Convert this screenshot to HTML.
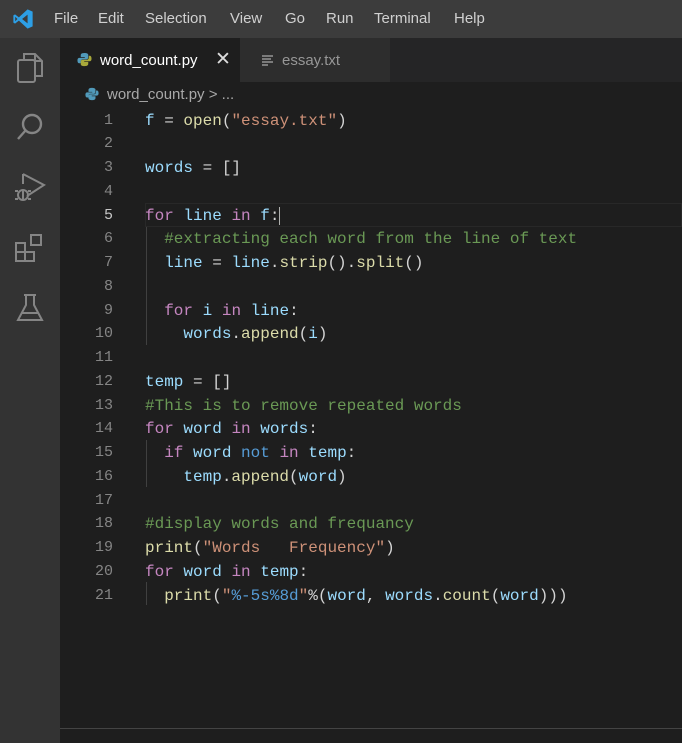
<!DOCTYPE html>
<html><head><style>
*{margin:0;padding:0;box-sizing:border-box}
body{width:682px;height:743px;background:#1e1e1e;overflow:hidden;font-family:"Liberation Sans",sans-serif;position:relative}
#title{position:absolute;left:0;top:0;width:682px;height:38px;background:#3c3c3c;color:#d0d0d0;font-size:15px}
#title span{position:absolute;top:10px}
#act{position:absolute;left:0;top:38px;width:60px;height:705px;background:#333}
#tabs{position:absolute;left:60px;top:38px;width:622px;height:44px;background:#252526}
.tab{position:absolute;top:0;height:44px;font-size:15px}
#code{position:absolute;left:60px;top:82px;width:622px;height:646px;background:#1e1e1e}
.ln{position:absolute;left:0;width:53px;text-align:right;color:#858585;font-family:"Liberation Mono",monospace;font-size:15px;height:24px;line-height:24px}
.cl{position:absolute;left:85px;white-space:pre;font-family:"Liberation Mono",monospace;font-size:16px;height:24px;line-height:24px;color:#d4d4d4}
.k{color:#c586c0}.v{color:#9cdcfe}.f{color:#dcdcaa}.s{color:#ce9178}.c{color:#6a9955}.b{color:#569cd6}
.g{position:absolute;width:1px;background:#404040}
</style></head><body>
<div id="title">
<svg style="position:absolute;left:12px;top:8px" width="22" height="22" viewBox="0 0 24 24"><path d="M17 1.5 L22.5 4 V20 L17 22.5 L7.5 13.8 L3.3 17 L1.5 16 V8 L3.3 7 L7.5 10.2 Z M17 7.2 L11 12 L17 16.8 Z M3.5 9.5 V14.5 L6 12 Z" fill="#2d9fe6" fill-rule="evenodd"/></svg>
<span style="left:54px">File</span><span style="left:98px">Edit</span><span style="left:145px">Selection</span><span style="left:230px">View</span><span style="left:285px">Go</span><span style="left:326px">Run</span><span style="left:374px">Terminal</span><span style="left:454px">Help</span>
</div>
<div id="act">
<svg style="position:absolute;left:15px;top:14px" width="30" height="32" viewBox="0 0 30 32" fill="none" stroke="#858585" stroke-width="2"><path d="M9 7 V2 H20 L27 9 V24 H20"/><path d="M20 2 V9 H27"/><rect x="3" y="8" width="17" height="22" rx="2"/></svg>
<svg style="position:absolute;left:15px;top:74px" width="30" height="32" viewBox="0 0 30 32" fill="none" stroke="#858585" stroke-width="2.4"><circle cx="17" cy="12" r="9"/><path d="M10.5 18.5 L3 27"/></svg>
<svg style="position:absolute;left:13px;top:133px" width="34" height="34" viewBox="0 0 34 34" fill="none" stroke="#858585" stroke-width="2"><path d="M10 3 V13 M10 3 L31 14 L14 25"/><circle cx="10" cy="24" r="5"/><path d="M2 20 H5 M2 28 H5 M15 20 H18 M15 28 H18 M10 19 V29"/></svg>
<svg style="position:absolute;left:14px;top:194px" width="32" height="32" viewBox="0 0 32 32" fill="none" stroke="#858585" stroke-width="2"><rect x="2" y="11" width="9" height="9"/><path d="M2 20 V29 H20 V20 H11 V11"/><path d="M11 20 V29"/><rect x="17" y="3" width="10" height="10"/></svg>
<svg style="position:absolute;left:15px;top:254px" width="30" height="32" viewBox="0 0 30 32" fill="none" stroke="#858585" stroke-width="2"><path d="M9 3 H21 M11 3 V13 L3 28 H27 L19 13 V3"/><path d="M7 21 H23"/></svg>
</div>
<div id="tabs">
<div class="tab" style="left:0;width:180px;background:#1e1e1e">
<svg style="position:absolute;left:17px;top:14px" width="15" height="15" viewBox="0 0 16 16"><path d="M8 1 C4 1 4 2.5 4 4 V5.5 H8.3 V6.2 H2.5 C1 6.2 0.5 7.5 0.5 9 C0.5 11 1.2 12 2.5 12 H4 V10 C4 8.7 5 7.8 6.2 7.8 H10 C11 7.8 12 7 12 6 V3 C12 1.8 10.5 1 8 1Z" fill="#519aba"/><path d="M8 15 C12 15 12 13.5 12 12 V10.5 H7.7 V9.8 H13.5 C15 9.8 15.5 8.5 15.5 7 C15.5 5 14.8 4 13.5 4 H12.6 V6 C12.6 7.3 11.6 8.3 10.3 8.3 H6 C5 8.3 4 9 4 10 V13 C4 14.2 5.5 15 8 15Z" fill="#cbcb41" opacity=".8"/></svg>
<span style="position:absolute;left:40px;top:14px;color:#fff">word_count.py</span>
<span style="position:absolute;left:155px;top:10px;color:#ddd;font-size:19px">✕</span>
</div>
<div class="tab" style="left:180px;width:150px;background:#2d2d2d">
<svg style="position:absolute;left:22px;top:16px" width="12" height="12" viewBox="0 0 12 12" stroke="#aaa" stroke-width="1.3"><path d="M0 2 H11 M0 5 H9 M0 8 H11 M0 11 H6"/></svg>
<span style="position:absolute;left:42px;top:14px;color:#969696">essay.txt</span>
</div>
</div>
<div id="code">
<svg style="position:absolute;left:25px;top:5px" width="14" height="14" viewBox="0 0 16 16"><path d="M8 1 C4 1 4 2.5 4 4 V5.5 H8.3 V6.2 H2.5 C1 6.2 0.5 7.5 0.5 9 C0.5 11 1.2 12 2.5 12 H4 V10 C4 8.7 5 7.8 6.2 7.8 H10 C11 7.8 12 7 12 6 V3 C12 1.8 10.5 1 8 1Z" fill="#519aba"/><path d="M8 15 C12 15 12 13.5 12 12 V10.5 H7.7 V9.8 H13.5 C15 9.8 15.5 8.5 15.5 7 C15.5 5 14.8 4 13.5 4 H12.6 V6 C12.6 7.3 11.6 8.3 10.3 8.3 H6 C5 8.3 4 9 4 10 V13 C4 14.2 5.5 15 8 15Z" fill="#519aba"/></svg>
<span style="position:absolute;left:47px;top:4px;color:#a9a9a9;font-size:15px">word_count.py &gt; ...</span>
<div style="position:absolute;left:85px;top:121px;width:537px;height:24px;border:1px solid #282828;border-left:none"></div>
<div style="position:absolute;left:85px;top:121px;width:1px;height:24px;background:#282828"></div>
<div class="g" style="left:86px;top:145px;height:118px"></div>
<div class="g" style="left:86px;top:358px;height:47px"></div>
<div class="g" style="left:86px;top:500px;height:23px"></div>
<div id="lines"></div>
<div style="position:absolute;left:0;top:646px;width:622px;height:1px;background:#444"></div>
</div>
<script>
var L=[
'<span class="v">f</span> = <span class="f">open</span>(<span class="s">"essay.txt"</span>)',
'',
'<span class="v">words</span> = []',
'',
'<span class="k">for</span> <span class="v">line</span> <span class="k">in</span> <span class="v">f</span>:<span style="border-left:1px solid #aeafad"></span>',
'  <span class="c">#extracting each word from the line of text</span>',
'  <span class="v">line</span> = <span class="v">line</span>.<span class="f">strip</span>().<span class="f">split</span>()',
'',
'  <span class="k">for</span> <span class="v">i</span> <span class="k">in</span> <span class="v">line</span>:',
'    <span class="v">words</span>.<span class="f">append</span>(<span class="v">i</span>)',
'',
'<span class="v">temp</span> = []',
'<span class="c">#This is to remove repeated words</span>',
'<span class="k">for</span> <span class="v">word</span> <span class="k">in</span> <span class="v">words</span>:',
'  <span class="k">if</span> <span class="v">word</span> <span class="b">not</span> <span class="k">in</span> <span class="v">temp</span>:',
'    <span class="v">temp</span>.<span class="f">append</span>(<span class="v">word</span>)',
'',
'<span class="c">#display words and frequancy</span>',
'<span class="f">print</span>(<span class="s">"Words   Frequency"</span>)',
'<span class="k">for</span> <span class="v">word</span> <span class="k">in</span> <span class="v">temp</span>:',
'  <span class="f">print</span>(<span class="s">"</span><span class="b">%-5s%8d</span><span class="s">"</span>%(<span class="v">word</span>, <span class="v">words</span>.<span class="f">count</span>(<span class="v">word</span>)))'
];
var h='';
for(var i=0;i<L.length;i++){var t=(26.5+i*23.75).toFixed(2);
h+='<div class="ln" style="top:'+t+'px;'+(i==4?'color:#c6c6c6':'')+'">'+(i+1)+'</div><div class="cl" style="top:'+t+'px">'+L[i]+'</div>';}
document.getElementById('lines').innerHTML=h;
</script>
</body></html>
